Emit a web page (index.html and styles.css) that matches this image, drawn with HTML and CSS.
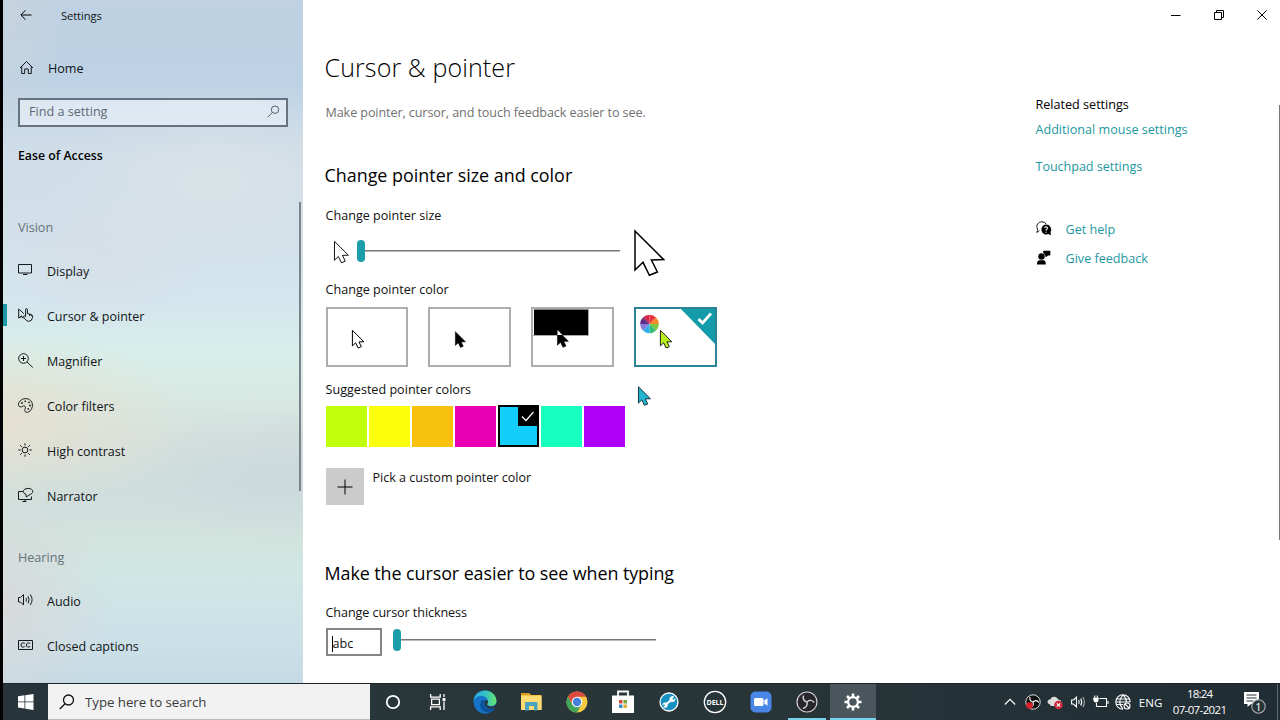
FILE: index.html
```html
<!DOCTYPE html>
<html lang="en">
<head>
<meta charset="utf-8">
<title>Settings</title>
<link rel="stylesheet" href="styles.css">
</head>
<body>
<svg class="defs" width="0" height="0" aria-hidden="true">
  <symbol id="arrow" viewBox="-1 -2 31 48" overflow="visible"><path vector-effect="non-scaling-stroke" d="M0 0V39L8 31.3L14.4 44.3L22.4 41L16.4 29L28.7 28.6Z"/></symbol>
</svg>
<div class="screen">
  <div class="window">
    <nav class="sidebar">
      <header class="titlebar">
        <svg width="12" height="12" viewBox="0 0 12 12"><path class="ln dark" d="M11.5 6H1M5.5 1.3L.8 6l4.700 4.700"/></svg>
        <span class="t-title">Settings</span>
      </header>
      <a class="nav home"><svg width="16" height="16" viewBox="0 0 16 16"><path class="ln" d="M1 8L7.500 1.500L14 8M2.700 6.500V13.500H5.700V9H9.300V13.500H12.300V6.500"/></svg><span class="t-home">Home</span></a>
      <div class="search"><span class="t-find">Find a setting</span><svg width="13" height="13" viewBox="0 0 13 13"><circle class="ln grey" cx="8" cy="4.700" r="3.700"/><path class="ln grey" d="M5.400 7.400L.7 12.200"/></svg></div>
      <h2 class="section"><span class="t-ease">Ease of Access</span></h2>
      <h3 class="group"><span class="t-vision">Vision</span></h3>
      <div class="list">
        <a class="nav"><svg width="16" height="16" viewBox="0 0 16 16"><path class="ln" d="M.5 1.500H13.500V10H.5ZM5 11.500H9.500"/></svg><span class="t-disp">Display</span></a>
        <a class="nav current"><svg width="16" height="16" viewBox="0 0 16 16"><path class="ln" d="M3.800 8L.7 10V1L5.800 5.600M1.500 9.700L3.500 8M3.500 8L5 10.500"/><path class="ln" d="M7.600 8.500V2.200Q7.600.5 8.500.5Q9.400.5 9.400 2.200V5.500L13.800 6.700Q15 7.200 14.600 9.500Q14 13.300 10.700 13.300Q8.500 13.300 7 11L5.200 8.500Q6.300 7 7.600 8.700M11.500 6.200V8M13.300 6.700V8.300"/></svg><span class="t-curs">Cursor &amp; pointer</span></a>
        <a class="nav"><svg width="16" height="16" viewBox="0 0 16 16"><circle class="ln" cx="5.500" cy="5.500" r="4.800"/><path class="ln" d="M9 9L14.800 14.500M5.500 3V8M3 5.500H8"/></svg><span class="t-mag">Magnifier</span></a>
        <a class="nav"><svg width="16" height="16" viewBox="0 0 16 16"><path class="ln" d="M2 8.800C-.6 8.200.3 4 3.200 2C6.500-.3 11.600.3 13.600 3.700C15.800 8 13.300 13.500 9.500 14.300C6.700 14.700 6.500 12.600 7.200 10.800C8 8.400 6.200 7 4.800 8.200C3.700 9 3 9 2 8.800Z"/><g><circle cx="4" cy="5" r=".9"/><circle cx="7.300" cy="3.300" r=".9"/><circle cx="11" cy="4.300" r=".9"/><circle cx="12" cy="7.500" r=".9"/><circle cx="10.300" cy="10.800" r=".9"/></g></svg><span class="t-col">Color filters</span></a>
        <a class="nav"><svg width="16" height="16" viewBox="0 0 16 16"><circle class="ln" cx="7" cy="7" r="2.900"/><path class="ln" d="M7 .3V2.500M7 11.500V13.700M.2 7H2.500M11.500 7H13.800M2.200 2.200L3.800 3.800M10.200 10.200L11.800 11.800M2.200 11.800L3.800 10.200M10.200 3.800L11.800 2.200"/></svg><span class="t-high">High contrast</span></a>
        <a class="nav"><svg width="16" height="16" viewBox="0 0 16 16"><path class="ln" d="M5 3.500H.5V11.500H13.500V8.500M4.500 13.500H8.500M7 11.500V13"/><path class="ln" d="M8 6.300C4.500 5.500 4.500 1.500 8 .8Q10-.1 12.500.8C15.700 1.800 15.300 5.500 12.300 6.300L8.200 9Z"/></svg><span class="t-narr">Narrator</span></a>
      </div>
      <h3 class="group second"><span class="t-hear">Hearing</span></h3>
      <div class="list">
        <a class="nav"><svg width="16" height="16" viewBox="0 0 16 16"><path class="ln" d="M.5 4.500H2.500L5.500 1.500V12L2.500 9H.5ZM8 5Q9 6.700 8 8.500M10 3.200Q12.200 6.700 10 10.300M12.200 1.500Q16 6.700 12.200 12"/></svg><span class="t-aud">Audio</span></a>
        <a class="nav"><svg width="16" height="16" viewBox="0 0 16 16"><path class="ln" d="M.5 2.500H14.500V11.500H.5ZM6.800 5.400Q3 3.800 3 7Q3 10.200 6.800 8.600M12.200 5.400Q8.500 3.800 8.500 7Q8.500 10.200 12.200 8.600"/></svg><span class="t-cc">Closed captions</span></a>
      </div>
      <i class="side-thumb"></i>
    </nav>

    <main class="content">
      <h1><span class="t-h1">Cursor &amp; pointer</span></h1>
      <p class="intro"><span class="t-intro">Make pointer, cursor, and touch feedback easier to see.</span></p>
      <h2 class="heading"><span class="t-h2a">Change pointer size and color</span></h2>
      <p class="label l-size"><span class="t-size">Change pointer size</span></p>
      <div class="slider-row">
        <svg class="ptr small" width="15" height="24"><use href="#arrow"/></svg>
        <div class="slider"><i></i></div>
        <svg class="ptr large" width="31" height="48"><use href="#arrow"/></svg>
      </div>
      <p class="label l-color"><span class="t-pcol">Change pointer color</span></p>
      <div class="tiles">
        <div class="tile"><svg width="78" height="56" viewBox="0 0 78 56"><use class="white" href="#arrow" x="24" y="20.500" width="12.400" height="19.200"/></svg></div>
        <div class="tile"><svg width="78" height="56" viewBox="0 0 78 56"><use class="black" href="#arrow" x="25" y="22" width="11" height="17"/></svg></div>
        <div class="tile"><svg width="78" height="56" viewBox="0 0 78 56"><path d="M1 .5H55V26H1Z"/><path d="M0 26.500H55.500V0" fill="none" stroke="#aaa"/><use class="black" href="#arrow" x="24" y="20.500" width="12" height="18.500"/><path d="M24.500 21V26H29.500Z" fill="#fff"/></svg></div>
        <div class="tile picked"><svg width="78" height="56" viewBox="0 0 78 56">
          <path d="M44-1H79V35Z" fill="#139ba9"/><path d="M62.500 10L66.500 14L75 4.500" fill="none" stroke="#fff" stroke-width="2.700"/>
          <g transform="translate(13.500 15)"><path fill="#d32650" d="M0 0L-6.600-6.600A9.300 9.300 0 0 1 0-9.300Z"/><path fill="#ea3440" d="M0 0V-9.300A9.300 9.300 0 0 1 6.600-6.600Z"/><path fill="#f58a2b" d="M0 0L6.600-6.600A9.300 9.300 0 0 1 9.300 0Z"/><path fill="#7fc843" d="M0 0H9.300A9.300 9.300 0 0 1 6.600 6.600Z"/><path fill="#36bd7c" d="M0 0L6.600 6.600A9.300 9.300 0 0 1 0 9.300Z"/><path fill="#31aeea" d="M0 0V9.300A9.300 9.300 0 0 1-6.600 6.600Z"/><path fill="#8b7bdc" d="M0 0L-6.600 6.600A9.300 9.300 0 0 1-9.300 0Z"/><path fill="#5d2e85" d="M0 0H-9.300A9.300 9.300 0 0 1-6.600-6.600Z"/></g>
          <use class="lime" href="#arrow" x="24" y="20.500" width="12.400" height="19.200"/></svg></div>
      </div>
      <p class="label l-sugg"><span class="t-sugg">Suggested pointer colors</span></p>
      <div class="swatches">
        <i class="c1"></i><i class="c2"></i><i class="c3"></i><i class="c4"></i>
        <i class="c5"><svg width="20" height="20" viewBox="0 0 20 20"><path d="M0 0H20V20H0Z"/><path d="M4 10.500L8 14.500L15.500 6" fill="none" stroke="#fff" stroke-width="1.200"/></svg></i>
        <i class="c6"></i><i class="c7"></i>
      </div>
      <div class="custom">
        <b><svg width="16" height="16" viewBox="0 0 16 16"><path class="ln dark" d="M8 .5V15.500M.5 8H15.500"/></svg></b>
        <span class="t-pick">Pick a custom pointer color</span>
      </div>
      <h2 class="heading typing"><span class="t-h2b">Make the cursor easier to see when typing</span></h2>
      <p class="label l-thick"><span class="t-thick">Change cursor thickness</span></p>
      <div class="thick-row"><div class="abc"><span class="t-abc">abc</span></div><div class="slider"><i></i></div></div>
    </main>

    <aside class="related">
      <div class="caption">
        <svg width="10" height="10" viewBox="0 0 10 10"><path class="ln dark" d="M0 5.500H9.500"/></svg>
        <svg width="10" height="10" viewBox="0 0 10 10"><path class="ln dark" d="M.5 2.500H7.500V9.500H.5ZM2.500 2.500V.5H9.500V7.500H7.500"/></svg>
        <svg width="10" height="10" viewBox="0 0 10 10"><path class="ln dark" d="M.3.3L9.700 9.700M9.700.3L.3 9.700"/></svg>
      </div>
      <p class="rel r1"><span class="t-rel">Related settings</span></p>
      <a class="rel link r2"><span class="t-add">Additional mouse settings</span></a>
      <a class="rel link r3"><span class="t-touch">Touchpad settings</span></a>
      <a class="rel link r4"><svg width="16" height="16" viewBox="0 0 16 16"><path class="ln" d="M3.500 9.500Q2.500 11 .7 11.300Q2 9.500 1.500 8C-.3 4.500 2 .8 6 .8Q9 .8 10 3"/><path d="M10 3.500A5 5 0 0 1 14.500 11L15 14.300L12.300 13.100A5 5 0 1 1 10 3.500Z"/><path d="M8.500 7Q8.800 5.700 10.200 5.800Q11.700 6 11.400 7.400Q11.200 8.200 10.100 9V9.800M10.100 10.700V11.800" fill="none" stroke="#fff" stroke-width="1.100"/></svg><span class="t-help">Get help</span></a>
      <a class="rel link r5"><svg width="16" height="16" viewBox="0 0 16 16"><circle cx="5.500" cy="6.500" r="3.200"/><path d="M1 14.500Q.8 10.500 3.500 10.300H7.500Q10 10.500 9.700 14.500ZM7.500.8H14.300V5.500H12L9.500 7.500V5.500H8.800Q8.800 3.500 7 2.800Z"/></svg><span class="t-give">Give feedback</span></a>
      <i class="main-thumb"></i>
    </aside>
    <svg class="live" width="13" height="20"><use href="#arrow"/></svg>
  </div>

  <footer class="taskbar">
    <div class="cell start"><svg width="16" height="16" viewBox="0 0 16 16"><path fill="#fff" d="M0 2.200L6.500 1.300V7.500H0ZM7.300 1.200L15.500 0V7.500H7.300ZM0 8.300H6.500V14.500L0 13.600ZM7.300 8.300H15.500V16L7.300 14.700Z"/></svg></div>
    <div class="tsearch"><svg width="16" height="16" viewBox="0 0 16 16"><circle cx="9.500" cy="6" r="5" fill="none" stroke="#111" stroke-width="1.300"/><path d="M6 9.700L.8 15" stroke="#111" stroke-width="1.300"/></svg><span class="t-type">Type here to search</span></div>
    <div class="cell"><svg width="16" height="16" viewBox="0 0 16 16"><circle cx="8" cy="8" r="6.200" fill="none" stroke="#fff" stroke-width="1.800"/></svg></div>
    <div class="cell task"><svg width="16" height="16" viewBox="0 0 16 16"><path d="M.6 0V3.200H10.200V0M.6 16V12.800H10.200V16M1.600 5.200H9.400V10.600H1.600ZM14 0V3M14 7.500V16" fill="none" stroke="#fff" stroke-width="1.300"/><path fill="#fff" d="M12.500 4H15.500V7H12.500Z"/></svg></div>
    <div class="cell"><svg width="24" height="24" viewBox="0 0 24 24">
      <defs><linearGradient id="e1" x2="1"><stop offset="0" stop-color="#27a8e5"/><stop offset=".55" stop-color="#35c4c0"/><stop offset="1" stop-color="#66e56a"/></linearGradient></defs>
      <circle cx="12" cy="12" r="11.500" fill="#1673c6"/><path d="M.6 10.500C2-3 22-3 23.500 10.500C23.500 16 18 17 14.500 15C13 14 15.500 13 15 11C14 5 4 4 .6 10.500Z" fill="url(#e1)"/><path d="M8 11C5 17 10 23 16 22.500C20 21.500 22 18.500 22 17.500C16 20.500 9 17 12 10.500Q9.500 9.500 8 11Z" fill="#0c529c"/><path d="M12 10.500Q14.500 9.700 15 11.500Q15.200 12.800 14 14Q14 16.800 19 16.500Q22 16 23.500 13.500L24 17L21.700 18Q15 20 12.300 15.500Q11 13 12 10.500Z" fill="#28353b"/></svg></div>
    <div class="cell"><svg width="21" height="19" viewBox="0 0 21 19"><path d="M0 1H8L10 3H20.500V18H0Z" fill="#f6c445"/><path d="M0 4H20.500V18H0Z" fill="#fddb72"/><path d="M0 1H8V3H0Z" fill="#d99a26"/><path d="M4 10H16.500V18.500H13V14H8V18.500H4Z" fill="#4ba3bd"/></svg></div>
    <div class="cell"><svg width="22" height="22" viewBox="0 0 22 22"><circle cx="11" cy="11" r="10.500" fill="#f5c842"/><path d="M1.900 5.700A10.500 10.500 0 0 1 20.100 5.700H11L6.400 13.700Z" fill="#db4b3e"/><path d="M1.900 5.700L6.500 13.600L11 16L11 21.500A10.500 10.500 0 0 1 1.900 5.700Z" fill="#43a45a"/><path d="M11 21.500L15.600 13.700L12 15L6.500 14Z" fill="#43a45a"/><circle cx="11" cy="11" r="5.300" fill="#fff"/><circle cx="11" cy="11" r="4.200" fill="#447fdc"/></svg></div>
    <div class="cell"><svg width="22" height="24" viewBox="0 0 22 24"><path d="M0 5.500H22V23H0Z" fill="#fff"/><path d="M6 6V1.500H16V6" fill="none" stroke="#fff" stroke-width="1.800"/><path d="M7 10H10.500V13.500H7Z" fill="#d64a35"/><path d="M11.500 10H15V13.500H11.500Z" fill="#75a843"/><path d="M7 14.500H10.500V18H7Z" fill="#388bc6"/><path d="M11.500 14.500H15V18H11.500Z" fill="#e7ae34"/></svg></div>
    <div class="cell"><svg width="20" height="20" viewBox="0 0 20 20"><circle cx="10" cy="10" r="9" fill="#168fc1" stroke="#fff" stroke-width="1.300"/><path d="M6.500 12.500L13.200 7.600" stroke="#fff" stroke-width="2"/><path d="M15.300 4.700L13.300 6.500L14.300 7.700L16.300 6.200A3 3 0 1 1 15.300 4.700ZM4 14.800L6 13.500L5.200 12.200L3.400 13.300A2.700 2.700 0 1 1 4 14.800Z" fill="#fff"/></svg></div>
    <div class="cell"><svg width="24" height="24" viewBox="0 0 24 24"><circle cx="12" cy="12" r="10.700" fill="none" stroke="#fff" stroke-width="1.300"/><text x="12" y="14.600" text-anchor="middle" class="dell" textLength="17" lengthAdjust="spacingAndGlyphs">DELL</text></svg></div>
    <div class="cell"><svg width="22" height="22" viewBox="0 0 22 22"><rect x=".5" y=".5" width="21" height="21" rx="5" fill="#4a86e8"/><rect x="4" y="7" width="9.500" height="8" rx="1.500" fill="#fff"/><path d="M14.300 9.500L17.500 7.300V14.700L14.300 12.500Z" fill="#fff"/></svg></div>
    <div class="cell run"><svg width="22" height="22" viewBox="0 0 22 22"><circle cx="11" cy="11" r="10" fill="#26252a" stroke="#d4cfd4" stroke-width="1.200"/><path d="M11 11Q6 9.500 7.500 4.500M11 11Q14.800 7.500 18.300 11.500M11 11Q12 16 7 17.500" fill="none" stroke="#d4cfd4" stroke-width="1.500"/></svg></div>
    <div class="cell active"><svg width="18" height="18" viewBox="0 0 18 18"><circle cx="9" cy="9" r="4.900" fill="none" stroke="#fff" stroke-width="2.300"/><path d="M9 .5V4M9 14V17.500M.5 9H4M14 9H17.500M3 3L5.500 5.500M12.500 12.500L15 15M3 15L5.500 12.500M12.500 5.500L15 3" stroke="#fff" stroke-width="2.600"/></svg></div>
    <div class="tray">
      <i><svg width="12" height="8" viewBox="0 0 12 8"><path class="w" d="M.8 6.500L6 1.300L11.200 6.500"/></svg></i>
      <i><svg width="16" height="16" viewBox="0 0 16 16"><circle cx="8" cy="8" r="7.200" fill="#111" stroke="#ddd"/><path class="w" d="M8 8Q4 7 5 3M8 8Q11 5 14 8.500M8 8Q9 12 6 13.500"/><circle cx="4.500" cy="11.500" r="3.300" fill="#d81f2c"/></svg></i>
      <i><svg width="16" height="16" viewBox="0 0 16 16"><path d="M2.500 10Q0 9.500.7 7Q1.500 5 3.500 5.200Q5 2 8.500 3Q10.500 3.500 11 5.500Q14 5.500 14.500 8.500L12 12H4Z" fill="#ddd"/><circle cx="11.500" cy="11" r="4.300" fill="#c6283a"/><path class="w" d="M9.800 9.300L13.200 12.700M13.200 9.300L9.800 12.700"/></svg></i>
      <i><svg width="15" height="14" viewBox="0 0 15 14"><path class="w" d="M.6 5H2.500L5.500 2V12L2.500 9H.6ZM7.700 5Q8.700 7 7.700 9M9.700 3.500Q11.700 7 9.700 10.500"/><path class="w" opacity=".6" d="M11.800 2Q15 7 11.800 12"/></svg></i>
      <i><svg width="16" height="14" viewBox="0 0 16 14"><path class="w" d="M6.500 3.500H13.500V11.500H3.500V8M15 6V9M1.700 .5V2.500M4.300 .5V2.500"/><path d="M.3 2.500H5.700V5Q5.200 7.500 3 7.500Q.8 7.500 .3 5Z" fill="#fff"/></svg></i>
      <i><svg width="16" height="16" viewBox="0 0 16 16"><path class="w" d="M8 .8A7.200 7.200 0 1 0 8 15.200M15.200 8A7.200 7.200 0 0 0 8 .8M8 .8Q1.500 8 8 15M8 .8Q11.500 4 11.500 8M1.500 5H14.500M1.500 10.500H8M.8 8H15"/><circle class="w" cx="12" cy="12" r="3"/><path class="w" d="M10 10L14 14"/></svg></i>
      <span class="lang"><span class="t-eng">ENG</span></span>
      <span class="clock"><span class="t-time">18:24</span><span class="t-date">07-07-2021</span></span>
      <span class="note"><svg width="24" height="24" viewBox="0 0 24 24"><path d="M1 2H16V14H8L4.500 17V14H1Z" fill="#fff"/><path d="M3.500 5H13.500M3.500 8H13.500M3.500 11H10" stroke="#26353a"/><circle cx="15.500" cy="16.500" r="6.700" fill="#26353a" stroke="#aaa" stroke-width="1.100"/><text x="15.500" y="20.500" text-anchor="middle" class="num">1</text></svg></span>
      <b class="peek"></b>
    </div>
  </footer>
</div>
</body>
</html>
```
FILE: styles.css
```css
* { box-sizing: border-box; }
body { margin: 0; font-family: "Open Sans", "Noto Sans", sans-serif; font-size: 12.6px; color: #111; }
h1, h2, h3, p { margin: 0; font-weight: 400; }
.defs { position: absolute; }
svg { display: block; flex: none; overflow: visible; }
span { white-space: nowrap; }
.ln { fill: none; stroke: #15191c; stroke-width: 1; }
.ln.dark { stroke: #000; }
.ln.grey { stroke: #555f68; }
.screen { width: 1280px; height: 720px; display: flex; flex-direction: column; overflow: hidden; background: #fff; border-left: 3px solid #000; }
.window { position: relative; height: 683px; display: grid; grid-template-columns: 300px 1fr 260px; }

.sidebar { position: relative; height: 683px; color: #111418;
  background:
    radial-gradient(ellipse 60px 120px at 0 20px, #cad4dba0, #cad4db00),
    radial-gradient(ellipse 170px 90px at 210px 180px, #dde4e6b0, #dde4e600),
    radial-gradient(ellipse 190px 90px at 0 420px, #e6e1d1, #e6e1d100),
    radial-gradient(ellipse 110px 70px at 100px 265px, #dbdbe270, #dbdbe200),
    radial-gradient(ellipse 170px 70px at 290px 475px, #c8d5dca0, #c8d5dc00),
    radial-gradient(ellipse 110px 120px at 0 600px, #d8d9da, #d8d9da00),
    linear-gradient(#bfd1e2 0, #bdd2e5 80px, #cfdde8 150px, #d2e0e9 230px, #d4e6ee 300px, #d7eeea 350px, #d8ebe5 385px, #d5e0dd 440px, #cfdedd 490px, #d2e4de 540px, #cfe7e4 575px, #cce0e8 640px, #c4dae4 683px); }
.titlebar { height: 31px; display: flex; align-items: center; gap: 29px; padding: 0 0 1px 17px; }
.nav { position: relative; height: 45px; display: flex; align-items: center; gap: 13px; padding-left: 15px; }
.nav svg { margin-bottom: 2px; }
.nav svg g { fill: #15191c; }
.home { margin-top: 15px; gap: 13px; padding-left: 16px; }
.search { margin: 7px 15px 0 15px; height: 29px; border: 2px solid #68727f; background: #eef3fa99; display: flex; align-items: center; justify-content: space-between; padding: 0 6px 2px 9px; color: #5f6872; }
.section { height: 28px; margin-top: 15px; padding-left: 15px; line-height: 28px; font-size: 12.300px; font-weight: 600; color: #000; }
.group { height: 28px; margin-top: 44px; padding-left: 15px; line-height: 28px; font-size: 12.600px; color: #66727a; }
.group.second { margin-top: 25px; }
.list { margin-top: 7px; }
.list .nav { font-size: 12.500px; }
.current::before { content: ""; position: absolute; left: 0; top: 10px; width: 4px; height: 22px; background: #1e98a4; }
.side-thumb { position: absolute; right: 2px; top: 202px; width: 2px; height: 289px; background: #7b848a; }

.content { padding-left: 22.500px; }
h1 { margin-top: 47px; height: 40px; line-height: 40px; font-size: 25px; font-weight: 300; margin-left: -1px; color: #000; }
.t-h1 { letter-spacing: .12px; }
.intro { height: 20px; line-height: 20px; margin-top: 16px; color: #707070; letter-spacing: -.1px; }
.heading { height: 28px; line-height: 28px; margin-top: 38px; font-size: 17.900px; margin-left: -1px; color: #000; }
.t-h2b { letter-spacing: -.07px; }
.label { height: 20px; line-height: 20px; }
.l-size { margin-top: 16px; padding-top: .5px; }
.slider-row { height: 50px; margin-top: 2px; display: flex; padding-left: 8px; }
.ptr { fill: #fff; stroke: #111; stroke-width: 1; }
.ptr.small { margin-top: 12.500px; }
.ptr.large { margin-left: 14px; margin-top: 1.500px; stroke-width: 1.500; stroke: #000; }
.slider { position: relative; width: 262.500px; height: 22px; margin-top: 13px; margin-left: 8.500px; display: flex; align-items: center; background: linear-gradient(#777, #777) 0 10px / 100% 1.500px no-repeat; }
.slider i { width: 8px; height: 22px; border-radius: 4px; background: #1c9eaa; }
.l-color { margin-top: 3px; }
.tiles { display: flex; gap: 20.200px; margin-top: 6.500px; }
.tile { width: 82.800px; height: 60px; border: 2px solid #adadad; }
.tile.picked { border-color: #2a8495; overflow: hidden; }
.white { fill: #fff; stroke: #000; }
.black { fill: #000; stroke: #000; stroke-width: .5; }
.lime { fill: #b9f01a; stroke: #222; }
.l-sugg { margin-top: 13px; }
.swatches { display: flex; gap: 2px; margin-top: 6.500px; }
.swatches i { width: 41px; height: 41px; }
.c1 { background: #c1fe0b; } .c2 { background: #fcff0c; } .c3 { background: #f8c10b; } .c4 { background: #ea00b4; }
.swatches .c5 { background: #13cdfb; border: 2px solid #000; display: flex; justify-content: flex-end; height: 42px; margin-top: -1px; }
.c5 svg { margin: -1px -1px 0 0; }
.c6 { background: #17ffbf; } .c7 { background: #ae00f7; }
.custom { display: flex; gap: 9px; margin-top: 21px; line-height: 20px; }
.custom .t-pick { letter-spacing: -.03px; }
.custom b { width: 38px; height: 37px; background: #cbcbcb; display: flex; align-items: center; justify-content: center; }
.typing { margin-top: 54px; }
.l-thick { margin-top: 15.500px; letter-spacing: -.08px; }
.thick-row { display: flex; margin-top: 5.500px; }
.abc { width: 56px; height: 28px; border: 2px solid #858585; padding: 2px 0 0 4px; line-height: 23px; }
.abc span { display: inline-block; line-height: 16px; border-left: 1px solid #000; }
.thick-row .slider { margin: 1px 0 0 11.500px; }

.related { position: relative; }
.caption { height: 30px; display: flex; align-items: center; gap: 33px; justify-content: flex-end; padding-right: 13.500px; }
.rel { height: 20px; display: flex; align-items: center; padding-left: 15.500px; }
.link { color: #1d98a1; }
.r1 { margin-top: 64px; color: #000; } .r2 { margin-top: 5px; } .r3 { margin-top: 17px; letter-spacing: -.05px; } .r4 { margin-top: 43px; } .r5 { margin-top: 9px; }
.r4, .r5 { gap: 14px; }
.main-thumb { position: absolute; right: 0; top: 105px; width: 1px; height: 435px; background: #777; }
.live { position: absolute; left: 635px; top: 386px; fill: #24b4cf; stroke: #18343f; }

.taskbar { height: 37px; display: flex; background: linear-gradient(90deg, #27343a, #293639 50%, #202d34); color: #fff; border-top: 1px solid #1c272c; }
.cell { width: 46px; height: 36px; display: flex; align-items: center; justify-content: center; }
.cell svg { margin-bottom: 1px; }
.start { width: 45px; }
.task svg { margin-left: -3px; }
.tsearch { width: 322px; background: #f2f2f2; color: #3b3b3b; display: flex; align-items: center; gap: 10px; padding-left: 11px; border-bottom: 1px solid #bbb; }
.run { background: linear-gradient(#76d3ea, #76d3ea) 4px 100% / 38px 2px no-repeat; }
.active { background: linear-gradient(#76d3ea, #76d3ea) 0 100% / 46px 2px no-repeat #4a565b; }
.dell { font: 700 6.500px "Open Sans", sans-serif; fill: #fff; }
.num { font: 11px "Open Sans", sans-serif; fill: #fff; }
.tray { margin-left: auto; display: flex; align-items: center; width: 281px; height: 36px; }
.tray i { width: 22.600px; display: flex; justify-content: center; }
.w { fill: none; stroke: #fff; stroke-width: 1.100; }
.lang { width: 32px; display: flex; justify-content: center; font-size: 11.500px; }
.clock { width: 66px; display: flex; flex-direction: column; align-items: center; line-height: 16px; font-size: 11.500px; margin-top: -1px; }
.t-time { letter-spacing: -.8px; }
.t-date { letter-spacing: -.63px; }
.note { margin-left: 10px; }
.peek { width: 1px; height: 36px; margin-left: auto; margin-right: 2px; background: #5d686d; }
.tsearch .t-type { font-size: 13.300px; letter-spacing: -.05px; }
.t-title { font-size: 11.200px; letter-spacing: -.1px; }
```
